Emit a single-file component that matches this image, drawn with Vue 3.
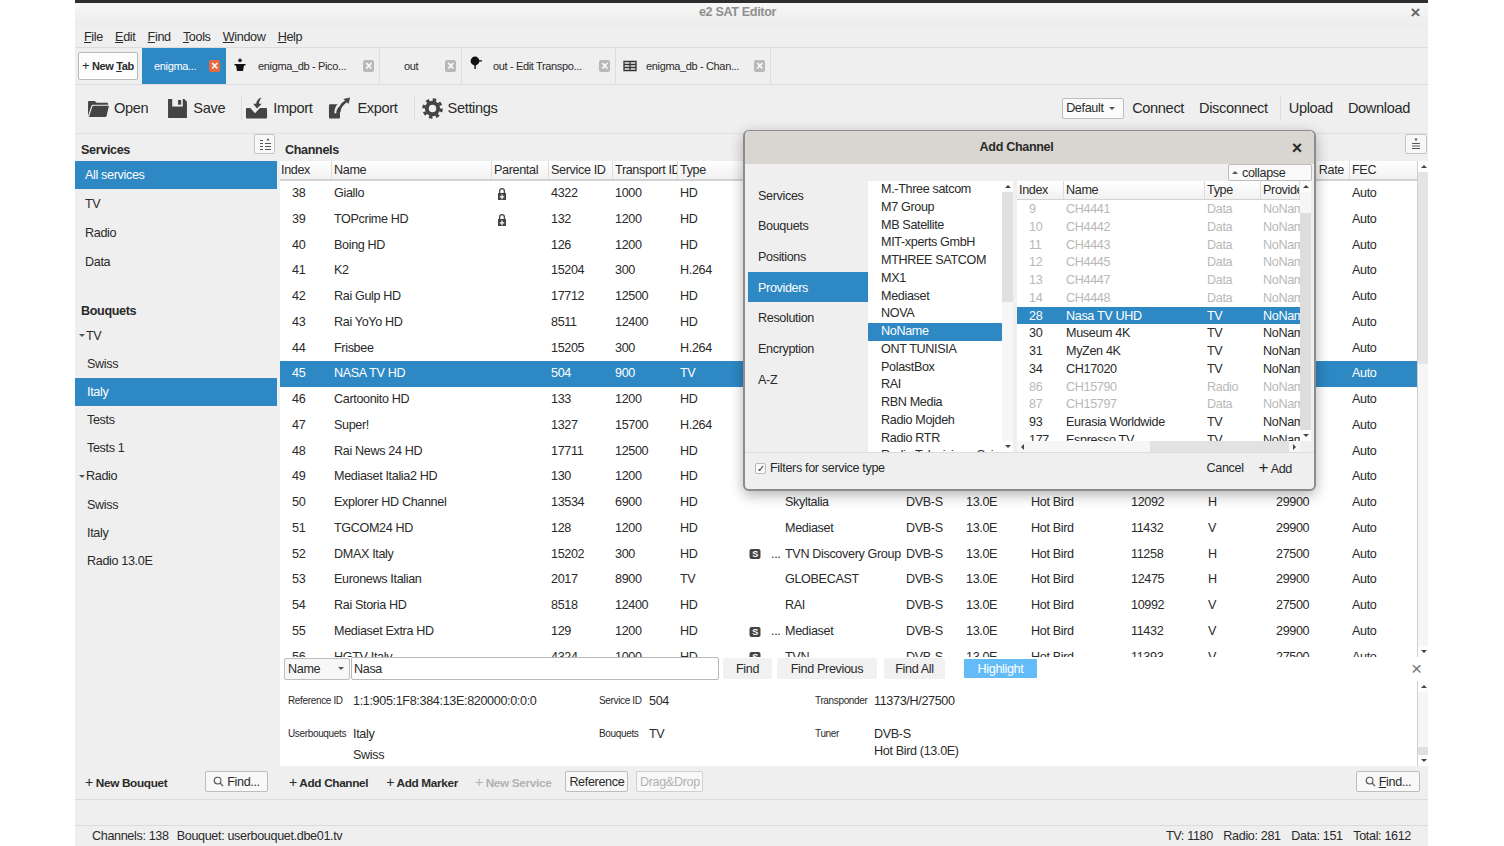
<template>
  <div class="window">
    <div class="topline"></div>
    <div class="titlebar">
      <span class="title">e2 SAT Editor</span>
      <span class="win-close">×</span>
    </div>
    <div class="menubar">
      <span v-for="m in menus" :key="m" class="menu-item"><u>{{ m[0] }}</u>{{ m.slice(1) }}</span>
    </div>

    <div class="tabbar">
      <button class="new-tab"><span class="plus">+</span> New <u>T</u>ab</button>
      <div class="tab active">
        <span class="tab-label">enigma...</span>
        <span class="tab-x hot">×</span>
      </div>
      <div v-for="t in tabs" :key="t.label" class="tab" :class="t.cls">
        <svg v-if="t.icon === 'picon'" class="tab-ico" viewBox="0 0 14 14" width="14" height="14">
          <circle cx="7" cy="2.400" r="1.800" fill="#222" />
          <path d="M1.500 6h11v1.600h-1.500L10 13H4L3 7.600H1.500z" fill="#111" />
        </svg>
        <svg v-else-if="t.icon === 'dish'" class="tab-ico" viewBox="0 0 14 14" width="14" height="14">
          <circle cx="6" cy="5" r="4.400" fill="#111" />
          <path d="M5.400 9h1.400v4H5.400zM10 4.200h3v1.400h-3z" fill="#111" />
        </svg>
        <svg v-else-if="t.icon === 'grid'" class="tab-ico" viewBox="0 0 14 14" width="14" height="14">
          <path d="M1 2.500h12v9H1z M7 2.500v9 M1 5.500h12 M1 8.500h12" fill="none" stroke="#333" stroke-width="1.300" />
        </svg>
        <span class="tab-label">{{ t.label }}</span>
        <span class="tab-x">×</span>
      </div>
    </div>

    <div class="toolbar">
      <div class="tool open">
        <svg viewBox="0 0 24 20" width="23" height="19">
          <path d="M1 18V3q0-1 1-1h6l2 2h11q1 0 1 1v1H6q-1 0-1.500 1z" fill="#444" />
          <path d="M2 19l3.500-11q.3-1 1.500-1h16l-2.500 11q-.2 1-1.500 1z" fill="#444" />
        </svg>
        <span>Open</span>
      </div>
      <div class="tool save">
        <svg viewBox="0 0 20 20" width="21" height="21">
          <path d="M1 1h4v7h10V1h1.500L19 3.500V19H1z M10.500 2h3v4.500h-3z" fill="#444" fill-rule="evenodd" />
          <path d="M5 1h10v7H5z M10.500 2h3v4.500h-3z" fill="#e9e9e9" fill-rule="evenodd" opacity="0.25" />
        </svg>
        <span>Save</span>
      </div>
      <span class="sep first"></span>
      <div class="tool import">
        <svg viewBox="0 0 24 24" width="23" height="24">
          <path d="M1 13q0-1 1-1h3.500l5 5.500 5-5.500H22q1 0 1 1v9q0 1-1 1H2q-1 0-1-1z" fill="#444" />
          <path d="M17 1q-4 1-5.500 6.500H8.500l4 5 5-5h-3q.3-3 2.500-6.500z" fill="#444" />
        </svg>
        <span>Import</span>
      </div>
      <div class="tool export">
        <svg viewBox="0 0 24 24" width="23" height="24">
          <path d="M1 9q0-1 1-1h8q-3 3-3.500 9l2 1q0-5 4-8v12q0 1-1 1H2q-1 0-1-1z" fill="#444" />
          <path d="M23 1l-7 1.500 1.800 1.800Q11.500 8 10.500 16l2.500.5Q13.500 10 19.800 6l1.700 1.800z" fill="#444" />
        </svg>
        <span>Export</span>
      </div>
      <span class="sep"></span>
      <div class="tool settings">
        <svg viewBox="0 0 24 24" width="21" height="21">
          <circle cx="12" cy="12" r="6.500" fill="none" stroke="#444" stroke-width="4.500" />
          <circle cx="12" cy="12" r="10" fill="none" stroke="#444" stroke-width="3.500" stroke-dasharray="3.900 3.950" />
        </svg>
        <span>Settings</span>
      </div>
      <div class="tool-spacer"></div>
      <div class="combo profile">Default <i class="down"></i></div>
      <span class="tool-text connect">Connect</span>
      <span class="tool-text disconnect">Disconnect</span>
      <span class="sep conn"></span>
      <span class="tool-text upload">Upload</span>
      <span class="tool-text download">Download</span>
    </div>

    <div class="main">
      <aside class="sidebar">
        <div class="side-head">
          <b>Services</b>
          <button class="mini-btn">
            <svg viewBox="0 0 14 14" width="14" height="14"><path d="M2 3h3v1H2zM2 6h3v1H2zM2 9h3v1H2zM2 12h3v1H2zM7 6h6v1H7zM7 9h6v1H7zM7 12h6v1H7zM8.500 3.500L10 1l1.500 2.500z" fill="#555" /></svg>
          </button>
        </div>
        <div class="side-item first sel">All services</div>
        <div class="side-item">TV</div>
        <div class="side-item">Radio</div>
        <div class="side-item">Data</div>
        <b class="bq-head">Bouquets</b>
        <div v-for="b in bouquets" :key="b.key" class="bq-item" :class="{ sel: b.sel, group: b.group }">
          <i v-if="b.group" class="tri"></i>{{ b.name }}
        </div>
      </aside>

      <section class="channels">
        <div class="ch-head">
          <b>Channels</b>
          <button class="mini-btn wide">
            <svg viewBox="0 0 14 14" width="14" height="14"><path d="M3 6h8v1H3zM3 8.500h8v1H3zM3 11h8v1H3zM5.500 1.500L7 4.500l1.500-3z" fill="#555" /></svg>
          </button>
        </div>
        <div class="ch-table">
          <div class="ch-left">
            <div class="ch-row ch-th">
              <span v-for="h in headers" :key="h.k" :class="h.cls">{{ h.t }}</span>
            </div>
            <div class="ch-body">
              <div v-for="r in channels" :key="r.i" class="ch-row" :class="{ sel: r.i === 45 }">
                <span class="c-idx">{{ r.i }}</span>
                <span>{{ r.n }}</span>
                <span class="c-mid lock-cell">
                  <svg v-if="r.lock" viewBox="0 0 12 14" width="12" height="14"><path d="M3 6V4a3 3 0 0 1 6 0v2H7.700V4a1.700 1.700 0 0 0-3.400 0v2z M2 6h8v7H2z" fill="#444" /><path d="M5.400 7.500h1.200v1.800h1.600v1.200H6.600v1.700H5.400v-1.700H3.800V9.300h1.600z" fill="#fff" /></svg>
                </span>
                <span>{{ r.s }}</span>
                <span>{{ r.t }}</span>
                <span>{{ r.v }}</span>
                <span class="c-mid">
                  <svg v-if="r.paid" viewBox="0 0 12 12" width="12" height="12"><rect x="0.500" y="1" width="11" height="10" rx="2" fill="#444" /><text x="6" y="9.200" text-anchor="middle" class="s-mark">S</text></svg>
                </span>
                <span>{{ r.paid ? '...' : '' }}</span>
                <span class="c-pkg">{{ r.p }}</span>
                <span>{{ r.p ? 'DVB-S' : '' }}</span>
                <span>{{ r.p ? '13.0E' : '' }}</span>
                <span>{{ r.p ? 'Hot Bird' : '' }}</span>
                <span>{{ r.f }}</span>
                <span>{{ r.pol }}</span>
                <span>{{ r.rate }}</span>
                <span>Auto</span>
              </div>
            </div>
          </div>
          <div class="vbar main-bar">
            <i class="arr up"></i><div class="thumb"></div><div class="track"></div><i class="arr dn"></i>
          </div>
        </div>

        <div class="searchbar">
          <div class="combo field">Name <i class="down"></i></div>
          <div class="entry">Nasa</div>
          <span class="flat find">Find</span>
          <span class="flat prev">Find Previous</span>
          <span class="flat all">Find All</span>
          <span class="highlight">Highlight</span>
          <div class="search-gap"></div>
          <span class="search-x">×</span>
        </div>

        <div class="info">
          <div class="info-main">
            <div class="info-col col1">
              <div class="info-row"><label>Reference ID</label><span>1:1:905:1F8:384:13E:820000:0:0:0</span></div>
              <div class="info-row r2"><label>Userbouquets</label><span>Italy</span></div>
              <div class="info-row r3"><label></label><span>Swiss</span></div>
            </div>
            <div class="info-col col2">
              <div class="info-row"><label>Service ID</label><span>504</span></div>
              <div class="info-row r2"><label>Bouquets</label><span>TV</span></div>
            </div>
            <div class="info-col col3">
              <div class="info-row"><label>Transponder</label><span>11373/H/27500</span></div>
              <div class="info-row r2"><label>Tuner</label><span>DVB-S</span></div>
              <div class="info-row r4"><label></label><span>Hot Bird (13.0E)</span></div>
            </div>
          </div>
          <div class="vbar info-bar">
            <i class="arr up"></i><div class="track"></div><div class="thumb"></div><i class="arr dn"></i>
          </div>
        </div>
      </section>
    </div>

    <div class="bottombar">
      <span class="act new-bq"><em>+</em> New Bouquet</span>
      <button class="btn find-left">
        <svg viewBox="0 0 12 12" width="11" height="11"><circle cx="5" cy="5" r="3.700" fill="none" stroke="#555" stroke-width="1.200" /><path d="M7.700 7.700l3.300 3.300" stroke="#555" stroke-width="1.400" /></svg>
        Find...
      </button>
      <span class="act add-ch"><em>+</em> Add Channel</span>
      <span class="act add-mk"><em>+</em> Add Marker</span>
      <span class="act off new-sv"><em>+</em> New Service</span>
      <button class="btn ref">Reference</button>
      <button class="btn dis">Drag&amp;Drop</button>
      <div class="tool-spacer"></div>
      <button class="btn find-right">
        <svg viewBox="0 0 12 12" width="11" height="11"><circle cx="5" cy="5" r="3.700" fill="none" stroke="#555" stroke-width="1.200" /><path d="M7.700 7.700l3.300 3.300" stroke="#555" stroke-width="1.400" /></svg>
        <span><u>F</u>ind...</span>
      </button>
    </div>
    <div class="strip"></div>
    <div class="statusbar">
      <span class="st-ch">Channels: 138</span>
      <span>Bouquet: userbouquet.dbe01.tv</span>
      <div class="tool-spacer"></div>
      <span class="st-r">TV: 1180</span>
      <span class="st-r">Radio: 281</span>
      <span class="st-r">Data: 151</span>
      <span class="st-r">Total: 1612</span>
    </div>

    <div class="dialog">
      <div class="dlg-title">
        <b>Add Channel</b>
        <span class="dlg-x">×</span>
      </div>
      <div class="dlg-top">
        <div class="combo collapse"><i class="upward"></i> collapse</div>
      </div>
      <div class="dlg-body">
        <div class="dlg-nav">
          <div v-for="n in filters" :key="n" class="nav-item" :class="{ sel: n === 'Providers' }">{{ n }}</div>
        </div>
        <div class="prov-list">
          <div v-for="p in providers" :key="p" class="prov-item" :class="{ sel: p === 'NoName' }">{{ p }}</div>
        </div>
        <div class="vbar prov-bar">
          <i class="arr up"></i><div class="thumb"></div><div class="track"></div><i class="arr dn"></i>
        </div>
        <div class="svc">
          <div class="svc-top">
            <div class="svc-table">
              <div class="svc-row svc-th"><span>Index</span><span>Name</span><span>Type</span><span>Provider</span></div>
              <div class="svc-body">
                <div v-for="s in services" :key="s.i" class="svc-row" :class="{ dim: s.dim, sel: s.i === 28 }">
                  <span class="s-idx">{{ s.i }}</span><span>{{ s.n }}</span><span>{{ s.t }}</span><span>NoName</span>
                </div>
              </div>
            </div>
            <div class="vbar svc-bar">
              <i class="arr up"></i><div class="gap"></div><div class="thumb"></div><i class="arr dn"></i>
            </div>
          </div>
          <div class="hbar">
            <i class="arr lf"></i><div class="hthumb"></div><div class="htrack"></div><i class="arr rt"></i>
          </div>
        </div>
      </div>
      <div class="dlg-foot">
        <span class="check">✓</span>
        <span>Filters for service type</span>
        <div class="tool-spacer"></div>
        <span class="dlg-cancel">Cancel</span>
        <span class="dlg-add"><em>+</em> Add</span>
      </div>
    </div>
  </div>
</template>

<script setup>
const menus = ['File', 'Edit', 'Find', 'Tools', 'Window', 'Help']

const tabs = [
  { label: 'enigma_db - Pico...', icon: 'picon', cls: 't1' },
  { label: 'out', icon: '', cls: 't2' },
  { label: 'out - Edit Transpo...', icon: 'dish', cls: 't3' },
  { label: 'enigma_db - Chan...', icon: 'grid', cls: 't4' }
]

const bouquets = [
  { key: 'tv', name: 'TV', group: true },
  { key: 'tv1', name: 'Swiss' },
  { key: 'tv2', name: 'Italy', sel: true },
  { key: 'tv3', name: 'Tests' },
  { key: 'tv4', name: 'Tests 1' },
  { key: 'radio', name: 'Radio', group: true },
  { key: 'r1', name: 'Swiss' },
  { key: 'r2', name: 'Italy' },
  { key: 'r3', name: 'Radio 13.0E' }
]

const headers = [
  { k: 'idx', t: 'Index', cls: 'th-idx' }, { k: 'name', t: 'Name' }, { k: 'par', t: 'Parental' },
  { k: 'sid', t: 'Service ID' }, { k: 'tid', t: 'Transport ID' }, { k: 'type', t: 'Type' },
  { k: 'pic', t: '' }, { k: 'dot', t: '' }, { k: 'pkg', t: 'Package' }, { k: 'sys', t: 'System' },
  { k: 'pos', t: 'Pos' }, { k: 'sat', t: 'Satellite' }, { k: 'frq', t: 'Freq' }, { k: 'pol', t: 'Pol' },
  { k: 'rate', t: 'Rate', cls: 'th-rate' }, { k: 'fec', t: 'FEC' }
]

const channels = [
  { i: 38, n: 'Giallo', s: 4322, t: 1000, v: 'HD', lock: true },
  { i: 39, n: 'TOPcrime HD', s: 132, t: 1200, v: 'HD', lock: true },
  { i: 40, n: 'Boing HD', s: 126, t: 1200, v: 'HD' },
  { i: 41, n: 'K2', s: 15204, t: 300, v: 'H.264' },
  { i: 42, n: 'Rai Gulp HD', s: 17712, t: 12500, v: 'HD' },
  { i: 43, n: 'Rai YoYo HD', s: 8511, t: 12400, v: 'HD' },
  { i: 44, n: 'Frisbee', s: 15205, t: 300, v: 'H.264' },
  { i: 45, n: 'NASA TV HD', s: 504, t: 900, v: 'TV' },
  { i: 46, n: 'Cartoonito HD', s: 133, t: 1200, v: 'HD' },
  { i: 47, n: 'Super!', s: 1327, t: 15700, v: 'H.264' },
  { i: 48, n: 'Rai News 24 HD', s: 17711, t: 12500, v: 'HD' },
  { i: 49, n: 'Mediaset Italia2 HD', s: 130, t: 1200, v: 'HD' },
  { i: 50, n: 'Explorer HD Channel', s: 13534, t: 6900, v: 'HD', p: 'Skyltalia', f: 12092, pol: 'H', rate: 29900 },
  { i: 51, n: 'TGCOM24 HD', s: 128, t: 1200, v: 'HD', p: 'Mediaset', f: 11432, pol: 'V', rate: 29900 },
  { i: 52, n: 'DMAX Italy', s: 15202, t: 300, v: 'HD', paid: true, p: 'TVN Discovery Group', f: 11258, pol: 'H', rate: 27500 },
  { i: 53, n: 'Euronews Italian', s: 2017, t: 8900, v: 'TV', p: 'GLOBECAST', f: 12475, pol: 'H', rate: 29900 },
  { i: 54, n: 'Rai Storia HD', s: 8518, t: 12400, v: 'HD', p: 'RAI', f: 10992, pol: 'V', rate: 27500 },
  { i: 55, n: 'Mediaset Extra HD', s: 129, t: 1200, v: 'HD', paid: true, p: 'Mediaset', f: 11432, pol: 'V', rate: 29900 },
  { i: 56, n: 'HGTV Italy', s: 4324, t: 1000, v: 'HD', paid: true, p: 'TVN', f: 11393, pol: 'V', rate: 27500 }
]

const filters = ['Services', 'Bouquets', 'Positions', 'Providers', 'Resolution', 'Encryption', 'A-Z']

const providers = [
  'M.-Three satcom', 'M7 Group', 'MB Satellite', 'MIT-xperts GmbH', 'MTHREE SATCOM', 'MX1',
  'Mediaset', 'NOVA', 'NoName', 'ONT TUNISIA', 'PolastBox', 'RAI', 'RBN Media', 'Radio Mojdeh',
  'Radio RTR', 'Radio Televisione Svizzera'
]

const services = [
  { i: 9, n: 'CH4441', t: 'Data', dim: true },
  { i: 10, n: 'CH4442', t: 'Data', dim: true },
  { i: 11, n: 'CH4443', t: 'Data', dim: true },
  { i: 12, n: 'CH4445', t: 'Data', dim: true },
  { i: 13, n: 'CH4447', t: 'Data', dim: true },
  { i: 14, n: 'CH4448', t: 'Data', dim: true },
  { i: 28, n: 'Nasa TV UHD', t: 'TV' },
  { i: 30, n: 'Museum 4K', t: 'TV' },
  { i: 31, n: 'MyZen 4K', t: 'TV' },
  { i: 34, n: 'CH17020', t: 'TV' },
  { i: 86, n: 'CH15790', t: 'Radio', dim: true },
  { i: 87, n: 'CH15797', t: 'Data', dim: true },
  { i: 93, n: 'Eurasia Worldwide', t: 'TV' },
  { i: 177, n: 'Espresso TV', t: 'TV' }
]
</script>

<style>
body {
  background: #fff;
  overflow: hidden;
}
</style>

<style scoped>
.window {
  position: relative;
  width: 1353px;
  height: 846px;
  margin-left: 75px;
  background: #efefef;
  color: #2a2a2a;
  font-family: "Liberation Sans", Arial, sans-serif;
  font-size: 12.600px;
  letter-spacing: -0.35px;
  overflow: hidden;
}
button {
  font: inherit;
  letter-spacing: inherit;
  color: inherit;
}
.topline {
  height: 3px;
  background: #2e2e2e;
}
.titlebar {
  height: 24px;
  display: flex;
  align-items: center;
  justify-content: center;
  position: relative;
  padding-right: 28px;
  box-sizing: border-box;
  background: linear-gradient(#f7f7f7, #ececec);
}
.title {
  font-weight: bold;
  color: #8f8f8f;
  padding-bottom: 6px;
}
.win-close {
  position: absolute;
  right: 8px;
  top: 0;
  font-size: 17px;
  line-height: 20px;
  font-weight: bold;
  color: #666;
}
.menubar {
  height: 20px;
  display: flex;
  align-items: center;
  padding-left: 9px;
  gap: 9.200px;
  border-bottom: 1px solid #dcdcdc;
}
.menu-item {
  margin-right: 3px;
}
.tabbar {
  height: 36px;
  display: flex;
  align-items: stretch;
  border-bottom: 1px solid #dcdcdc;
}
.new-tab {
  width: 60px;
  height: 28px;
  margin: 4px 4px 0 3px;
  padding: 0 0 2px;
  background: #fdfdfd;
  border: 1px solid #b9b9b9;
  border-radius: 2px;
  font-size: 11px;
  font-weight: bold;
}
.plus {
  font-weight: normal;
  font-size: 13px;
}
.tab {
  display: flex;
  align-items: center;
  border-right: 1px solid #dedede;
  font-size: 11px;
  position: relative;
}
.tab.active {
  width: 84px;
  background: #2d88c4;
  color: #fff;
  justify-content: flex-start;
  padding-left: 12px;
  box-sizing: border-box;
  border-right: 0;
}
.tab.active .tab-x {
  right: 6px;
}
.t1 { width: 154px; box-sizing: border-box; padding-left: 32px; }
.t2 { width: 82px; box-sizing: border-box; padding-left: 24px; }
.t3 { width: 154px; box-sizing: border-box; padding-left: 31px; }
.t4 { width: 155px; box-sizing: border-box; padding-left: 30px; }
.tab-ico {
  position: absolute;
  left: 7px;
  top: 10px;
}
.t3 .tab-ico { top: 8px; }
.t4 .tab-ico { top: 11px; }
.tab-x {
  position: absolute;
  right: 5px;
  top: 12px;
  width: 11px;
  height: 12px;
  border-radius: 2px;
  background: #b8b8b8;
  color: #fff;
  font-size: 12px;
  font-weight: bold;
  line-height: 12px;
  text-align: center;
}
.tab-x.hot {
  background: #e8693c;
}
.toolbar {
  height: 49px;
  display: flex;
  align-items: center;
  font-size: 14.600px;
  letter-spacing: -0.35px;
  border-bottom: 1px solid #e2e2e2;
  padding-bottom: 2px;
  box-sizing: border-box;
}
.tool {
  display: flex;
  align-items: center;
  gap: 4px;
}
.tool.open { margin-left: 12px; }
.tool.save { margin-left: 19px; gap: 5px; }
.tool.import { margin-left: 3px; gap: 5px; }
.tool.export { margin-left: 16px; gap: 6px; }
.tool.settings { margin-left: 7px; gap: 5px; }
.sep {
  width: 1px;
  height: 26px;
  background: #dcdcdc;
  margin-left: 16px;
}
.sep.conn {
  margin-left: 12px;
  margin-right: 8px;
}
.tool-spacer {
  flex: 1;
}
.combo {
  box-sizing: border-box;
  background: #fafafa;
  border: 1px solid #bdbdbd;
  border-radius: 2px;
  display: flex;
  align-items: center;
}
.profile {
  width: 62px;
  height: 21px;
  padding-left: 3px;
  font-size: 12.600px;
  justify-content: space-between;
  padding-right: 8px;
  margin-right: 8px;
}
.down {
  width: 0;
  height: 0;
  border: 3px solid transparent;
  border-top: 3px solid #555;
  border-bottom: 0;
}
.upward {
  width: 0;
  height: 0;
  border: 3px solid transparent;
  border-bottom: 3px solid #555;
  border-top: 0;
}
.tool-text { white-space: nowrap; }
.disconnect { margin-left: 15px; }
.download { margin-left: 15px; margin-right: 18px; }

.main {
  height: 632px;
  display: flex;
}
.sidebar {
  width: 202px;
  flex: none;
}
.side-head {
  height: 27px;
  display: flex;
  justify-content: space-between;
  padding: 0 2px 0 6px;
  align-items: flex-end;
  box-sizing: border-box;
}
.side-head b {
  padding-bottom: 4px;
}
.mini-btn {
  width: 21px;
  height: 20px;
  padding: 0;
  margin-bottom: 7px;
  display: flex;
  align-items: center;
  justify-content: center;
  background: #f8f8f8;
  border: 1px solid #c4c4c4;
  border-radius: 2px;
}
.side-item {
  height: 29px;
  line-height: 30px;
  padding-left: 10px;
}
.side-item.first {
  height: 28px;
  line-height: 28px;
}
.sel {
  background: #2d88c4;
  color: #fff;
}
.bq-head {
  display: block;
  height: 20px;
  line-height: 18px;
  margin-top: 25.500px;
  padding-left: 6px;
}
.bq-item {
  height: 28.200px;
  line-height: 28.200px;
  padding-left: 12px;
  display: flex;
  align-items: center;
}
.bq-item.group {
  padding-left: 4px;
  gap: 1px;
}
.tri {
  width: 0;
  height: 0;
  border: 3px solid transparent;
  border-top: 3px solid #555;
  border-bottom: 0;
}
.channels {
  width: 1148px;
  margin-left: 3px;
  flex: none;
}
.ch-head {
  height: 27px;
  display: flex;
  justify-content: space-between;
  align-items: flex-end;
  padding-left: 5px;
  box-sizing: border-box;
}
.ch-head b {
  padding-bottom: 4px;
}
.mini-btn.wide {
  width: 22px;
  margin-right: 1px;
}
.ch-table {
  display: flex;
  height: 496px;
  background: #fff;
}
.ch-left {
  width: 1137px;
  flex: none;
}
.ch-row {
  display: grid;
  grid-template-columns: 52px 160px 57px 64px 65px 70px 21px 14px 121px 60px 65px 100px 77px 68px 76px 67px;
  height: 25.760px;
  line-height: 25.760px;
  white-space: nowrap;
}
.ch-row > span {
  padding-left: 2px;
  overflow: hidden;
}
.ch-row .c-idx {
  padding-left: 12px;
}
.ch-row .c-mid {
  padding-left: 1px;
  display: flex;
  align-items: center;
}
.ch-row .lock-cell {
  padding-left: 4px;
}
.ch-row .c-pkg {
  overflow: visible;
}
.ch-th {
  height: 20px;
  line-height: 18px;
  background: linear-gradient(#fff, #f1f1f1);
  border-bottom: 2px solid #d2d2d2;
  box-sizing: border-box;
}
.ch-th > span {
  border-right: 1px solid #dcdcdc;
}
.ch-th > span:last-child {
  border-right: 0;
}
.ch-row .th-idx {
  padding-left: 1px;
}
.ch-row .th-rate {
  text-align: right;
  padding-right: 5px;
}
.ch-body {
  height: 476px;
  overflow: hidden;
}
.s-mark {
  font-family: "Liberation Sans", Arial, sans-serif;
  font-size: 9px;
  font-weight: bold;
  fill: #fff;
}
.vbar {
  width: 11px;
  flex: none;
  display: flex;
  flex-direction: column;
  align-items: stretch;
  background: #f6f6f6;
  box-sizing: border-box;
}
.arr {
  display: block;
  height: 11px;
  flex: none;
  position: relative;
  background: #fdfdfd;
}
.arr::after {
  content: "";
  position: absolute;
  left: 3px;
  top: 4px;
  width: 0;
  height: 0;
  border: 3px solid transparent;
}
.arr.up::after { border-bottom: 3px solid #444; border-top: 0; }
.arr.dn::after { border-top: 3px solid #444; border-bottom: 0; }
.arr.lf::after { border-right: 3px solid #444; border-left: 0; top: 3px; left: 4px; }
.arr.rt::after { border-left: 3px solid #444; border-right: 0; top: 3px; left: 4px; }
.main-bar {
  border-left: 1px solid #cfcfcf;
}
.main-bar .thumb {
  height: 192px;
  background: #e4e4e4;
}
.main-bar .track,
.prov-bar .track {
  flex: 1;
}
.searchbar {
  height: 24px;
  margin-top: 0;
  display: flex;
  align-items: center;
  background: #fff;
  padding-left: 4px;
  padding-bottom: 1px;
  box-sizing: border-box;
}
.combo.field {
  width: 66px;
  height: 22px;
  padding: 0 5px 0 3px;
  justify-content: space-between;
  background: #f7f7f7;
}
.entry {
  width: 368px;
  height: 23px;
  line-height: 23px;
  box-sizing: border-box;
  margin-left: 1px;
  border: 1px solid #b9b9b9;
  border-radius: 2px;
  padding-left: 2px;
  background: #fff;
}
.flat {
  height: 21px;
  line-height: 22px;
  text-align: center;
  background: #f1f1f1;
  border-radius: 2px;
}
.flat.find { width: 49px; margin-left: 4px; }
.flat.prev { width: 100px; margin-left: 5px; }
.flat.all { width: 61px; margin-left: 7px; }
.highlight {
  width: 73px;
  height: 19px;
  line-height: 20px;
  margin-left: 19px;
  text-align: center;
  background: #63bcf8;
  color: #fff;
  border-radius: 1px;
}
.search-gap {
  flex: 1;
}
.search-x {
  width: 17px;
  font-size: 19px;
  line-height: 19px;
  color: #777;
}
.info {
  height: 85px;
  display: flex;
  background: #fff;
}
.info-main {
  width: 1137px;
  flex: none;
  display: flex;
  padding-left: 8px;
  box-sizing: border-box;
}
.info-col {
  padding-top: 11px;
}
.col1 { width: 311px; }
.col2 { width: 216px; }
.info-row {
  display: flex;
  height: 18px;
  line-height: 18px;
}
.info-row.r2 {
  margin-top: 15px;
}
.info-row.r3 {
  margin-top: 3px;
}
.info-row.r4 {
  margin-top: -1px;
}
.info-row label {
  flex: none;
  font-size: 10px;
}
.col1 label { width: 65px; }
.col2 label { width: 50px; }
.col3 label { width: 59px; }
.info-bar {
  border-left: 1px solid #cfcfcf;
}
.info-bar .track {
  flex: 1;
}
.info-bar .thumb {
  height: 8px;
  background: #e0e0e0;
}
.bottombar {
  height: 34px;
  display: flex;
  align-items: center;
  padding-bottom: 2px;
  box-sizing: border-box;
  border-bottom: 1px solid #dadada;
}
.act {
  font-weight: bold;
  font-size: 11.800px;
  white-space: nowrap;
}
.act em {
  font-style: normal;
  font-weight: normal;
  font-size: 14px;
}
.act.off {
  color: #b2b2b2;
}
.new-bq { margin-left: 10px; width: 120px; }
.btn {
  height: 21px;
  padding: 0;
  border: 1px solid #bdbdbd;
  border-radius: 2px;
  background: #f8f8f8;
  display: flex;
  align-items: center;
  justify-content: center;
  gap: 3px;
}
.find-left { width: 63px; }
.add-ch { margin-left: 21px; }
.add-mk { margin-left: 18px; }
.new-sv { margin-left: 17px; }
.ref { width: 63px; margin-left: 14px; }
.dis { width: 67px; margin-left: 8px; color: #b2b2b2; border-color: #d0d0d0; }
.find-right { width: 64px; margin-right: 8px; }
.strip {
  height: 26px;
  box-sizing: border-box;
  border-bottom: 1px solid #dadada;
}
.statusbar {
  height: 20px;
  display: flex;
  align-items: center;
  padding: 0 17px 0 17px;
}
.st-ch { margin-right: 8px; }
.st-r { margin-left: 10.500px; }

.dialog {
  position: absolute;
  left: 668px;
  top: 130px;
  width: 573px;
  height: 361px;
  box-sizing: border-box;
  display: flex;
  flex-direction: column;
  background: #efefef;
  border: 2px solid #8c8c8c;
  border-width: 1px 2px 2px 2px;
  border-radius: 6px;
  box-shadow: 0 4px 14px rgba(0, 0, 0, 0.3);
  overflow: hidden;
}
.dlg-title {
  height: 33px;
  flex: none;
  background: #d9d5d0;
  display: flex;
  align-items: center;
  justify-content: center;
  position: relative;
  padding-bottom: 2px;
  padding-right: 26px;
  box-sizing: border-box;
}
.dlg-x {
  position: absolute;
  right: 12px;
  top: 5px;
  font-size: 18px;
  line-height: 24px;
  font-weight: bold;
}
.dlg-top {
  height: 17px;
  flex: none;
  display: flex;
  justify-content: flex-end;
  padding-right: 2px;
}
.combo.collapse {
  width: 84px;
  height: 17px;
  padding-left: 3px;
  gap: 4px;
}
.dlg-body {
  height: 271px;
  flex: none;
  display: flex;
  padding-left: 3px;
  background: #efefef;
}
.dlg-nav {
  width: 120px;
  flex: none;
}
.nav-item {
  height: 30.700px;
  line-height: 32.700px;
  padding-left: 10px;
}
.nav-item:first-child {
  margin-top: -1.500px;
}
.prov-list {
  width: 134px;
  flex: none;
  background: #fff;
  overflow: hidden;
}
.prov-item {
  height: 17.750px;
  line-height: 17.750px;
  padding-left: 13px;
  white-space: nowrap;
}
.prov-bar .thumb {
  height: 110px;
  background: #e0e0e0;
}
.svc {
  width: 294px;
  margin-left: 4px;
  flex: none;
  display: flex;
  flex-direction: column;
}
.svc-top {
  display: flex;
  height: 260px;
}
.svc-table {
  width: 283px;
  flex: none;
  background: #fff;
}
.svc-row {
  display: grid;
  grid-template-columns: 47px 141px 56px 39px;
  height: 17.750px;
  line-height: 19.500px;
  white-space: nowrap;
  overflow: hidden;
}
.svc-row > span {
  overflow: hidden;
  padding-left: 2px;
}
.svc-row .s-idx {
  padding-left: 12px;
}
.svc-th {
  height: 19px;
  line-height: 18px;
  background: linear-gradient(#fff, #f1f1f1);
  border-bottom: 1px solid #d2d2d2;
  box-sizing: border-box;
}
.svc-th > span {
  border-right: 1px solid #dcdcdc;
}
.svc-body {
  height: 241px;
  overflow: hidden;
}
.svc-row.dim {
  color: #b8b8b8;
}
.svc-bar .gap {
  height: 21px;
}
.svc-bar .thumb {
  flex: 1;
  background: #dddddd;
}
.hbar {
  height: 11px;
  flex: none;
  display: flex;
  background: #f6f6f6;
  width: 283px;
}
.hbar .arr {
  width: 11px;
  background: #f6f6f6;
}
.hthumb {
  width: 122px;
}
.htrack {
  flex: 1;
  background: #e2e2e2;
}
.dlg-foot {
  flex: 1;
  display: flex;
  align-items: center;
  border-top: 1px solid #dcdcdc;
  padding: 0 22px 6px 10px;
}
.check {
  width: 11px;
  height: 11px;
  margin-right: 4px;
  box-sizing: border-box;
  border: 1px solid #bbb;
  border-radius: 2px;
  background: #fafafa;
  font-size: 10px;
  line-height: 9px;
  text-align: center;
}
.dlg-cancel {
  margin-right: 15px;
}
.dlg-add em {
  font-style: normal;
  font-size: 17px;
}
</style>
